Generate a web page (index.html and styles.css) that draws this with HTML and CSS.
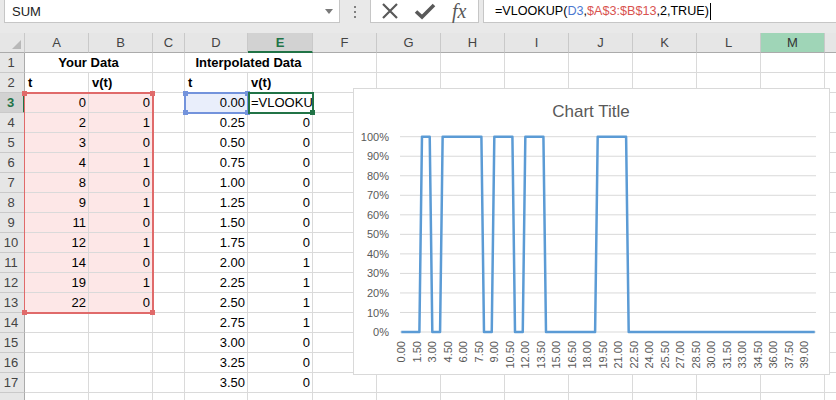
FILE: index.html
```html
<!DOCTYPE html>
<html>
<head>
<meta charset="utf-8">
<link rel="stylesheet" href="styles.css">
</head>
<body>
<div class="bar">
  <div class="namebox"><span>SUM</span><svg class="caret" width="8" height="5" viewBox="0 0 8 5"><polygon points="0,0 8,0 4,5" fill="#7a7a7a"/></svg></div>
  <div class="dots"><svg width="4" height="14" viewBox="0 0 4 14"><rect x="1" y="1" width="2" height="2" fill="#808080"/><rect x="1" y="6" width="2" height="2" fill="#808080"/><rect x="1" y="11" width="2" height="2" fill="#808080"/></svg></div>
  <div class="fxbtns">
    <svg class="ico" width="20" height="20" viewBox="0 0 20 20"><path d="M3 3 L17 17 M17 3 L3 17" stroke="#595959" stroke-width="2.2" fill="none"/></svg>
    <svg class="ico" width="22" height="20" viewBox="0 0 22 20"><path d="M2 10.5 L8 16 L20 4" stroke="#595959" stroke-width="3.6" fill="none"/></svg>
    <span class="fx">fx</span>
  </div>
  <div class="formula">=VLOOKUP(<span class="cb">D3</span>,<span class="cr">$A$3:$B$13</span>,2,TRUE)<span class="cursor"></span></div>
</div>

<div class="sheet">
  <div class="row hdr"><div class="corner"><svg width="9" height="9" viewBox="0 0 9 9"><polygon points="9,0 9,9 0,9" fill="#b8b8b8"/></svg></div><div>A</div><div>B</div><div>C</div><div>D</div><div class="hsel">E</div><div>F</div><div>G</div><div>H</div><div>I</div><div>J</div><div>K</div><div>L</div><div class="hm">M</div><div></div></div>
  <div class="row"><div class="rh">1</div><div class="m2 b">Your Data</div><div></div><div class="m2 b">Interpolated Data</div><i></i><i></i><i></i><i></i><i></i><i></i><i></i><i></i><i></i></div>
  <div class="row"><div class="rh">2</div><div class="b">t</div><div class="b">v(t)</div><div></div><div class="b">t</div><div class="b">v(t)</div><i></i><i></i><i></i><i></i><i></i><i></i><i></i><i></i><i></i></div>
  <div class="row"><div class="rh rsel">3</div><div class="p n">0</div><div class="p n">0</div><div></div><div class="bl n">0.00</div><div class="edit">=VLOOKU</div><i></i><i></i><i></i><i></i><i></i><i></i><i></i><i></i><i></i></div>
  <div class="row"><div class="rh">4</div><div class="p n">2</div><div class="p n">1</div><div></div><div class="n">0.25</div><div class="n">0</div><i></i><i></i><i></i><i></i><i></i><i></i><i></i><i></i><i></i></div>
  <div class="row"><div class="rh">5</div><div class="p n">3</div><div class="p n">0</div><div></div><div class="n">0.50</div><div class="n">0</div><i></i><i></i><i></i><i></i><i></i><i></i><i></i><i></i><i></i></div>
  <div class="row"><div class="rh">6</div><div class="p n">4</div><div class="p n">1</div><div></div><div class="n">0.75</div><div class="n">0</div><i></i><i></i><i></i><i></i><i></i><i></i><i></i><i></i><i></i></div>
  <div class="row"><div class="rh">7</div><div class="p n">8</div><div class="p n">0</div><div></div><div class="n">1.00</div><div class="n">0</div><i></i><i></i><i></i><i></i><i></i><i></i><i></i><i></i><i></i></div>
  <div class="row"><div class="rh">8</div><div class="p n">9</div><div class="p n">1</div><div></div><div class="n">1.25</div><div class="n">0</div><i></i><i></i><i></i><i></i><i></i><i></i><i></i><i></i><i></i></div>
  <div class="row"><div class="rh">9</div><div class="p n">11</div><div class="p n">0</div><div></div><div class="n">1.50</div><div class="n">0</div><i></i><i></i><i></i><i></i><i></i><i></i><i></i><i></i><i></i></div>
  <div class="row"><div class="rh">10</div><div class="p n">12</div><div class="p n">1</div><div></div><div class="n">1.75</div><div class="n">0</div><i></i><i></i><i></i><i></i><i></i><i></i><i></i><i></i><i></i></div>
  <div class="row"><div class="rh">11</div><div class="p n">14</div><div class="p n">0</div><div></div><div class="n">2.00</div><div class="n">1</div><i></i><i></i><i></i><i></i><i></i><i></i><i></i><i></i><i></i></div>
  <div class="row"><div class="rh">12</div><div class="p n">19</div><div class="p n">1</div><div></div><div class="n">2.25</div><div class="n">1</div><i></i><i></i><i></i><i></i><i></i><i></i><i></i><i></i><i></i></div>
  <div class="row"><div class="rh">13</div><div class="p n">22</div><div class="p n">0</div><div></div><div class="n">2.50</div><div class="n">1</div><i></i><i></i><i></i><i></i><i></i><i></i><i></i><i></i><i></i></div>
  <div class="row"><div class="rh">14</div><div></div><div></div><div></div><div class="n">2.75</div><div class="n">1</div><i></i><i></i><i></i><i></i><i></i><i></i><i></i><i></i><i></i></div>
  <div class="row"><div class="rh">15</div><div></div><div></div><div></div><div class="n">3.00</div><div class="n">0</div><i></i><i></i><i></i><i></i><i></i><i></i><i></i><i></i><i></i></div>
  <div class="row"><div class="rh">16</div><div></div><div></div><div></div><div class="n">3.25</div><div class="n">0</div><i></i><i></i><i></i><i></i><i></i><i></i><i></i><i></i><i></i></div>
  <div class="row"><div class="rh">17</div><div></div><div></div><div></div><div class="n">3.50</div><div class="n">0</div><i></i><i></i><i></i><i></i><i></i><i></i><i></i><i></i><i></i></div>
  <div class="row"><div class="rh"></div><div></div><div></div><div></div><div></div><div></div><i></i><i></i><i></i><i></i><i></i><i></i><i></i><i></i><i></i></div>
</div>

<div class="sel red"><b class="hd tl"></b><b class="hd tr"></b><b class="hd bl"></b><b class="hd br"></b></div>
<div class="sel blue"><b class="hd tl"></b><b class="hd tr"></b><b class="hd bl"></b><b class="hd br"></b></div>
<div class="sel green"><b class="hd br"></b></div>

<div class="chart">
  <svg width="475" height="285" viewBox="1 1 475 285">
    <text class="title" x="238" y="29">Chart Title</text>
    <g class="grid">
      <line x1="47" x2="463" y1="48.7" y2="48.7"/>
      <line x1="47" x2="463" y1="68.23" y2="68.23"/>
      <line x1="47" x2="463" y1="87.76" y2="87.76"/>
      <line x1="47" x2="463" y1="107.29" y2="107.29"/>
      <line x1="47" x2="463" y1="126.82" y2="126.82"/>
      <line x1="47" x2="463" y1="146.35" y2="146.35"/>
      <line x1="47" x2="463" y1="165.88" y2="165.88"/>
      <line x1="47" x2="463" y1="185.41" y2="185.41"/>
      <line x1="47" x2="463" y1="204.94" y2="204.94"/>
      <line x1="47" x2="463" y1="224.47" y2="224.47"/>
      <line x1="47" x2="463" y1="244" y2="244"/>
    </g>
    <g class="ylab">
      <text x="36" y="52.7">100%</text>
      <text x="36" y="72.2">90%</text>
      <text x="36" y="91.8">80%</text>
      <text x="36" y="111.3">70%</text>
      <text x="36" y="130.8">60%</text>
      <text x="36" y="150.4">50%</text>
      <text x="36" y="169.9">40%</text>
      <text x="36" y="189.4">30%</text>
      <text x="36" y="208.9">20%</text>
      <text x="36" y="228.5">10%</text>
      <text x="36" y="248">0%</text>
    </g>
    <polyline class="series" points="48.3,244 66.39,244 68.97,48.7 76.72,48.7 79.31,244 87.06,244 89.64,48.7 128.4,48.7 130.99,244 138.74,244 141.32,48.7 159.41,48.7 162,244 169.75,244 172.33,48.7 190.42,48.7 193,244 242.1,244 244.68,48.7 273.11,48.7 275.69,244 461.74,244"/>
    <g class="xlab">
      <text transform="translate(52.3,253) rotate(-90)">0.00</text>
      <text transform="translate(67.8,253) rotate(-90)">1.50</text>
      <text transform="translate(83.3,253) rotate(-90)">3.00</text>
      <text transform="translate(98.8,253) rotate(-90)">4.50</text>
      <text transform="translate(114.3,253) rotate(-90)">6.00</text>
      <text transform="translate(129.8,253) rotate(-90)">7.50</text>
      <text transform="translate(145.3,253) rotate(-90)">9.00</text>
      <text transform="translate(160.8,253) rotate(-90)">10.50</text>
      <text transform="translate(176.3,253) rotate(-90)">12.00</text>
      <text transform="translate(191.8,253) rotate(-90)">13.50</text>
      <text transform="translate(207.3,253) rotate(-90)">15.00</text>
      <text transform="translate(222.8,253) rotate(-90)">16.50</text>
      <text transform="translate(238.3,253) rotate(-90)">18.00</text>
      <text transform="translate(253.9,253) rotate(-90)">19.50</text>
      <text transform="translate(269.4,253) rotate(-90)">21.00</text>
      <text transform="translate(284.9,253) rotate(-90)">22.50</text>
      <text transform="translate(300.4,253) rotate(-90)">24.00</text>
      <text transform="translate(315.9,253) rotate(-90)">25.50</text>
      <text transform="translate(331.4,253) rotate(-90)">27.00</text>
      <text transform="translate(346.9,253) rotate(-90)">28.50</text>
      <text transform="translate(362.4,253) rotate(-90)">30.00</text>
      <text transform="translate(377.9,253) rotate(-90)">31.50</text>
      <text transform="translate(393.4,253) rotate(-90)">33.00</text>
      <text transform="translate(408.9,253) rotate(-90)">34.50</text>
      <text transform="translate(424.4,253) rotate(-90)">36.00</text>
      <text transform="translate(439.9,253) rotate(-90)">37.50</text>
      <text transform="translate(455.4,253) rotate(-90)">39.00</text>
    </g>
  </svg>
</div>
</body>
</html>
```
FILE: styles.css
```css
body {
  margin: 0;
  width: 836px;
  height: 400px;
  overflow: hidden;
  position: relative;
  background: #fff;
  font-family: "Liberation Sans", Arial, sans-serif;
  font-size: 13px;
  color: #000;
}

/* formula bar */
.bar {
  height: 33px;
  background: #e9e9e9;
  display: flex;
  align-items: flex-start;
}
.namebox {
  margin-left: 4px;
  width: 336px;
  height: 23px;
  box-sizing: border-box;
  background: #fff;
  border: 1px solid #c6c6c6;
  border-top: 0;
  display: flex;
  align-items: center;
  justify-content: space-between;
  padding: 0 6px 0 7px;
  font-size: 13px;
  color: #222;
}
.dots {
  width: 30px;
  height: 23px;
  display: flex;
  align-items: center;
  justify-content: center;
}
.fxbtns {
  width: 109px;
  height: 23px;
  box-sizing: border-box;
  background: #fff;
  border: 1px solid #c6c6c6;
  border-top: 0;
  display: flex;
  align-items: center;
  padding-left: 9px;
  gap: 14px;
}
.fx {
  font-family: "Liberation Serif", "Times New Roman", serif;
  font-style: italic;
  font-size: 20px;
  color: #595959;
  line-height: 20px;
  margin-left: 2px;
}
.formula {
  margin-left: 4px;
  flex: 1;
  height: 23px;
  box-sizing: border-box;
  background: #fff;
  border: 1px solid #c6c6c6;
  border-top: 0;
  border-right: 0;
  padding-left: 11px;
  font-size: 12.6px;
  line-height: 22px;
  white-space: nowrap;
  display: flex;
  align-items: center;
}
.cb { color: #4a78d0; }
.cr { color: #d9534f; }
.cursor {
  display: inline-block;
  width: 1px;
  height: 17px;
  background: #000;
  margin-left: 1px;
}

/* sheet */
.row {
  display: grid;
  grid-template-columns: 25px 64px 64px 32px 63px 65px repeat(9, 64px);
  height: 20px;
}
.row > * {
  box-sizing: border-box;
  border-right: 1px solid #dadada;
  border-bottom: 1px solid #dadada;
  padding: 0 3px;
  line-height: 19px;
  white-space: nowrap;
  overflow: hidden;
  font-style: normal;
}
.hdr > * {
  background: #e6e6e6;
  text-align: center;
  color: #444;
  border-right-color: #c9c9c9;
  border-bottom-color: #ababab;
}
.hdr .corner {
  display: flex;
  align-items: flex-end;
  justify-content: flex-end;
  padding: 0 3px 3px 0;
}
.hdr .hsel {
  background: #d2d2d2;
  color: #217346;
  font-weight: bold;
  border-bottom: 2px solid #217346;
  line-height: 19px;
}
.hdr .hm {
  background: #9fd5b7;
  color: #333;
}
.rh {
  background: #e6e6e6;
  text-align: center;
  color: #444;
  border-right-color: #ababab !important;
  border-bottom-color: #c9c9c9 !important;
  padding: 0 2px 0 0 !important;
}
.rh.rsel {
  background: #d2d2d2;
  color: #217346;
  font-weight: bold;
  border-right: 2px solid #217346 !important;
}
.m2 {
  grid-column: span 2;
  text-align: center;
}
.b { font-weight: bold; }
.n { text-align: right; padding-right: 2px !important; }
.p { background: #fde7e7; }
.bl { background: #e9eefb; }
.edit { padding-left: 3px; }

/* range outlines */
.sel {
  position: absolute;
  box-sizing: border-box;
}
.sel.red {
  left: 24px;
  top: 92px;
  width: 130px;
  height: 222px;
  border: 2px solid #e06a6a;
  border-left-width: 1px;
}
.sel.blue {
  left: 184px;
  top: 92px;
  width: 65px;
  height: 22px;
  border: 2px solid #7393dc;
}
.sel.green {
  left: 248px;
  top: 92px;
  width: 66px;
  height: 22px;
  border: 2px solid #217346;
}
.hd {
  position: absolute;
  width: 5px;
  height: 5px;
}
.red .hd { background: #e06a6a; }
.blue .hd { background: #7393dc; }
.green .hd { background: #217346; }
.hd.tl { left: -3px; top: -3px; }
.hd.tr { right: -3px; top: -3px; }
.hd.bl { left: -3px; bottom: -3px; }
.hd.br { right: -3px; bottom: -3px; }

/* chart */
.chart {
  position: absolute;
  left: 353px;
  top: 88px;
  width: 477px;
  height: 287px;
  box-sizing: border-box;
  border: 1px solid #d9d9d9;
  background: #fff;
}
.chart svg { display: block; }
.chart text {
  font-family: "Liberation Sans", Arial, sans-serif;
  fill: #595959;
}
.chart .title {
  font-size: 17px;
  text-anchor: middle;
}
.grid line {
  stroke: #d9d9d9;
  stroke-width: 1;
}
.ylab text {
  font-size: 11px;
  text-anchor: end;
}
.xlab text {
  font-size: 11px;
  text-anchor: end;
}
.series {
  fill: none;
  stroke: #5b9bd5;
  stroke-width: 2.5;
  stroke-linejoin: round;
}
```
